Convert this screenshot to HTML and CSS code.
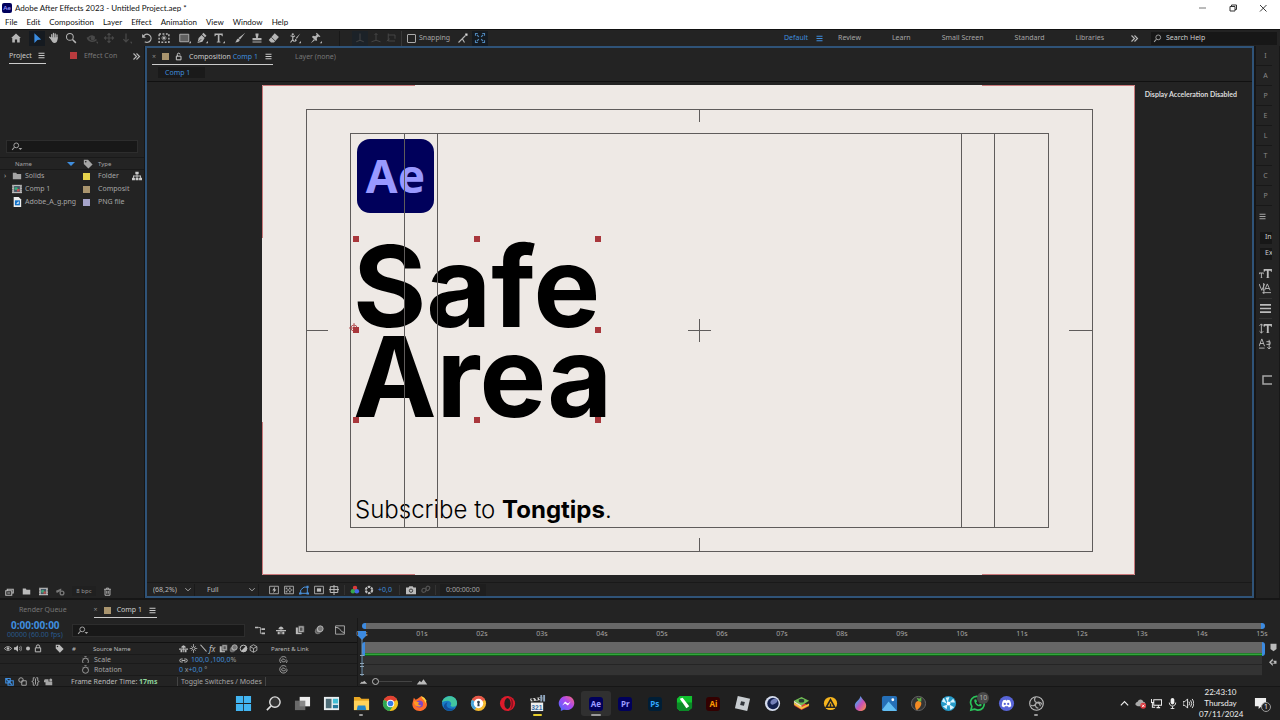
FILE: index.html
```html
<!DOCTYPE html>
<html lang="en">
<head>
    <meta charset="UTF-8">
    <meta name="viewport" content="width=device-width, initial-scale=1.0">
    <title>Adobe After Effects 2023 - Untitled Project.aep *</title>
    <link rel="stylesheet" href="styles.css">
</head>
<body>
    <!-- shared icons -->
    <svg class="sprite" aria-hidden="true">
        <symbol id="i-menu" viewBox="0 0 12 12"><path d="M2 3h8M2 6h8M2 9h8" fill="none" stroke="currentColor" stroke-width="1.4"/></symbol>
        <symbol id="i-more" viewBox="0 0 12 12"><path d="M2 2l4 4-4 4M6 2l4 4-4 4" fill="none" stroke="currentColor" stroke-width="1.5"/></symbol>
        <symbol id="i-search" viewBox="0 0 16 12"><circle cx="7" cy="4.5" r="3.2" fill="none" stroke="currentColor" stroke-width="1.3"/><path d="M4.6 7L1.5 10.5" stroke="currentColor" stroke-width="1.4"/><path d="M10 8h5l-2.500 2.500z" fill="currentColor"/></symbol>
        <symbol id="i-find" viewBox="0 0 12 12"><circle cx="7" cy="4.500" r="3.200" fill="none" stroke="currentColor" stroke-width="1.200"/><path d="M4.600 7L1.500 10.500" stroke="currentColor" stroke-width="1.400"/></symbol>
        <symbol id="i-down" viewBox="0 0 12 12"><path d="M2 4l4 4 4-4" fill="none" stroke="currentColor" stroke-width="1.300"/></symbol>
        <symbol id="i-tag" viewBox="0 0 12 12"><path d="M1 1h5l5.500 5.500-5 5L1 6z" fill="currentColor"/><circle cx="3.300" cy="3.300" r="1" fill="#222"/></symbol>
        <symbol id="i-folder" viewBox="0 0 12 12"><path d="M1 2h4l1 1.500h5V10H1z" fill="currentColor"/></symbol>
        <symbol id="i-comp" viewBox="0 0 12 12"><path d="M0 1h12v10H0z" fill="#bbb"/><path d="M2.500 2.500h7v7h-7z" fill="#456"/><circle cx="5" cy="5.500" r="2" fill="#3aa776"/><path d="M6 6h3v3H6z" fill="#c0504d"/><path d="M1 2v8M11 2v8" stroke="#333" stroke-dasharray="1 1"/></symbol>
        <symbol id="i-spiral" viewBox="0 0 12 12"><path d="M7.500 5.500a2 2 0 1 0-1 2.200c2 0 3-1 3-3.200M9.800 2.500A5 5 0 1 0 11 6" fill="none" stroke="currentColor" stroke-width="1.200"/></symbol>
        <symbol id="i-watch" viewBox="0 0 12 12"><circle cx="6" cy="7" r="4" fill="none" stroke="currentColor" stroke-width="1.200"/><path d="M4.500 1h3M2 2.500l1 1M10 2.500l-1 1" stroke="currentColor" stroke-width="1.200"/></symbol>
        <symbol id="i-shy" viewBox="0 0 12 12"><path d="M3 5a3 3 0 0 1 6 0zM0 6h12v1.500H0zM2 8h2.500v3H2zM7.500 8H10v3H7.500zM5.500 1.500h1V11h-1z" fill="currentColor"/></symbol>
        <symbol id="i-blend" viewBox="0 0 12 12"><path d="M1 3h7v8H1z" fill="currentColor"/><path d="M4 1h7v8H4z" fill="#aaa" stroke="#333" stroke-width=".8"/><path d="M6 3h3v4H6z" fill="#555"/></symbol>
        <symbol id="i-blur" viewBox="0 0 12 12"><circle cx="4.500" cy="7.500" r="3.500" fill="#777"/><circle cx="6" cy="6" r="3.500" fill="#999" stroke="#333" stroke-width=".7"/><circle cx="7.500" cy="4.500" r="3.500" fill="#777" stroke="#ccc" stroke-width=".9"/></symbol>
        <symbol id="i-cube" viewBox="0 0 12 12"><path d="M6 1l4.500 2.500v5L6 11 1.500 8.500v-5zM1.500 3.500L6 6l4.500-2.500M6 6v5" fill="none" stroke="currentColor" stroke-width="1.100"/></symbol>
    </svg>

    <div class="app">
        <header class="title-area">
            <div class="titlebar">
                <span class="ae-small">Ae</span>
                <span class="window-title">Adobe After Effects 2023 - Untitled Project.aep *</span>
                <div class="window-buttons">
                    <button aria-label="Minimize"><svg viewBox="0 0 10 10"><path d="M1 5h7" stroke="#777"/></svg></button>
                    <button aria-label="Restore"><svg viewBox="0 0 10 10"><path d="M2 3.500h5V8H2zM3.500 3.500V2h5v4.500H7" fill="none" stroke="#333"/></svg></button>
                    <button aria-label="Close"><svg viewBox="0 0 10 10"><path d="M2 2l6.500 6.500M8.500 2L2 8.500" stroke="#222" stroke-width="0.900"/></svg></button>
                </div>
            </div>
            <nav class="menubar">
                <button>File</button><button>Edit</button><button>Composition</button><button>Layer</button><button>Effect</button><button>Animation</button><button>View</button><button>Window</button><button>Help</button>
            </nav>
        </header>

        <div class="toolbar">
            <div class="tools">
                <div class="tool-group">
                    <button aria-label="Home"><svg viewBox="0 0 16 16"><path d="M8 2l6.500 6H13v6H9.500v-4h-3v4H3V8H1.500z" fill="currentColor"/></svg></button>
                </div>
                <div class="tool-group">
                    <button class="active" aria-label="Selection"><svg viewBox="0 0 16 16"><path d="M4.500 1.500l9 8.500-5 .5-4 4z" fill="#3a8be0"/></svg></button>
                    <button aria-label="Hand"><svg viewBox="0 0 16 16"><path d="M5 8V3.500M7.300 7V2M9.600 7V2.500M12 8V4M4.500 9L2.200 7" fill="none" stroke="currentColor" stroke-width="1.700" stroke-linecap="round"/><path d="M4 7h9c0 4-1 7.500-4 7.500S5 12 3 8.500z" fill="currentColor"/></svg></button>
                    <button aria-label="Zoom"><svg viewBox="0 0 16 16"><circle cx="6.500" cy="6.500" r="4.500" fill="none" stroke="currentColor" stroke-width="1.400"/><path d="M10 10l4.500 4.500" stroke="currentColor" stroke-width="2"/></svg></button>
                </div>
                <div class="tool-group dim">
                    <button aria-label="Orbit camera"><svg viewBox="0 0 16 16"><path d="M4 10a4 3 0 1 1 7-3M2 7c0 5 8 7 12 3" fill="none" stroke="currentColor" stroke-width="2"/><circle cx="9" cy="8" r="3" fill="currentColor"/><path d="M13 13h3v3z" fill="currentColor"/></svg></button>
                    <button aria-label="Pan camera"><svg viewBox="0 0 16 16"><path d="M8 2v12M2 8h12M6 4l2-2 2 2M6 12l2 2 2-2M4 6L2 8l2 2M12 6l2 2-2 2" fill="none" stroke="currentColor" stroke-width="1.500"/></svg></button>
                    <button aria-label="Dolly camera"><svg viewBox="0 0 16 16"><path d="M8 2v11M4.500 9.500L8 13l3.500-3.500" fill="none" stroke="currentColor" stroke-width="1.700"/><path d="M13 13h3v3z" fill="currentColor"/></svg></button>
                </div>
                <div class="tool-group">
                    <button aria-label="Rotation"><svg viewBox="0 0 16 16"><path d="M3 6a5.500 5.500 0 1 1 2 7" fill="none" stroke="currentColor" stroke-width="1.500"/><path d="M1.500 2.500v5h5z" fill="currentColor"/></svg></button>
                    <button aria-label="Pan behind"><svg viewBox="0 0 16 16"><path d="M1.500 2.500h13v11h-13z" fill="none" stroke="currentColor" stroke-width="2" stroke-dasharray="2.500 2"/><path d="M8 4.500v7M4.500 8h7M6 6l4 4M10 6l-4 4" stroke="currentColor" stroke-width="1.200"/></svg></button>
                </div>
                <div class="tool-group">
                    <button aria-label="Rectangle"><svg viewBox="0 0 16 16"><path d="M1 3h12v10H1z" fill="#606060" stroke="currentColor" stroke-width="1.200"/><path d="M13 15h3v-3z" fill="currentColor"/></svg></button>
                    <button aria-label="Pen"><svg viewBox="0 0 16 16"><path d="M10 1l4 4-2 2-4-4zM7.500 4l4 4-3 5-6.500 1.500L3.500 8z" fill="currentColor"/><path d="M3 13.500l4-4" stroke="#232323"/><path d="M13 15h3v-3z" fill="currentColor"/></svg></button>
                    <button aria-label="Type"><svg viewBox="0 0 16 16"><path d="M2 2h11v3.500h-1L11 4H8.600v8.500L10 13v1H5v-1l1.400-.5V4H4L3 5.500H2z" fill="currentColor"/><path d="M13 15h3v-3z" fill="currentColor"/></svg></button>
                </div>
                <div class="tool-group">
                    <button aria-label="Brush"><svg viewBox="0 0 16 16"><path d="M15 1L8 10 6 8zM5.500 8.500l2.300 2.300c-1 3-3.500 3.200-6.300 3.200 2-1.500 1.500-5 4-5.500z" fill="currentColor"/></svg></button>
                    <button aria-label="Clone stamp"><svg viewBox="0 0 16 16"><path d="M6 2h4v2L9 8h5v3H2V8h5L6 4zM2 12.500h12V14H2z" fill="currentColor"/></svg></button>
                    <button aria-label="Eraser"><svg viewBox="0 0 16 16"><path d="M9 1.500l5.500 5L8 14H4L1 10.500z" fill="currentColor"/><path d="M4.500 7l5 5" stroke="#232323"/></svg></button>
                </div>
                <div class="tool-group">
                    <button aria-label="Roto brush"><svg viewBox="0 0 16 16"><path d="M2 5l3 1v4l-3 4M5 7l3-2M5 10l2 3" fill="none" stroke="currentColor" stroke-width="1.500"/><circle cx="5" cy="3" r="1.500" fill="currentColor"/><path d="M15 2l-4.500 7-1.500-1zM8.500 9l2 1.500c-1 2-2 2.500-3.500 2.500z" fill="currentColor"/><path d="M13 15h3v-3z" fill="currentColor"/></svg></button>
                </div>
                <div class="tool-group">
                    <button aria-label="Puppet pin"><svg viewBox="0 0 16 16"><path d="M9 1l5 5-1.500.5L11 6l-2 2 .5 3-1.500 1L2.500 6.500 4 5l3 .5 2-2L8 2zM5 9.500l1.500 1.500L1 15z" fill="currentColor"/><path d="M13 15h3v-3z" fill="currentColor"/></svg></button>
                </div>
                <div class="tool-group axes">
                    <button class="active" aria-label="Local axis"><svg viewBox="0 0 16 16"><path d="M8 2v9l-5 2M8 11l5 2" fill="none" stroke="currentColor" stroke-width="1.200"/></svg></button>
                    <button aria-label="World axis"><svg viewBox="0 0 16 16"><path d="M8 2v9l-6 2M8 11l6 2M6 4l2-2 2 2" fill="none" stroke="currentColor" stroke-width="1.200"/></svg></button>
                    <button aria-label="View axis"><svg viewBox="0 0 16 16"><path d="M3 2v10h9M3 4h9v5M1 12l4-3" fill="none" stroke="currentColor" stroke-width="1.200"/></svg></button>
                </div>
                <label class="snapping"><input type="checkbox"> Snapping</label>
                <div class="tool-group">
                    <button aria-label="Snap edges"><svg viewBox="0 0 16 16"><path d="M2 14l5-5 3 5M7 9l4-4" fill="none" stroke="currentColor" stroke-width="1.500"/><path d="M11 2h3v3h-3z" fill="#ddd"/></svg></button>
                    <button class="active" aria-label="Snap features"><svg viewBox="0 0 16 16"><path d="M2 5V2h3M11 2h3v3M14 11v3h-3M5 14H2v-3M4 4l2.500 2.500M12 4L9.500 6.500M12 12L9.500 9.500M4 12l2.500-2.500" fill="none" stroke="#4f86b8" stroke-width="1.500"/></svg></button>
                </div>
            </div>
            <nav class="workspaces">
                <button class="current">Default</button>
                <button class="current menu-btn" aria-label="Workspace menu"><svg><use href="#i-menu"/></svg></button>
                <button>Review</button>
                <button>Learn</button>
                <button>Small Screen</button>
                <button>Standard</button>
                <button>Libraries</button>
            </nav>
            <button class="more-btn" aria-label="More workspaces"><svg><use href="#i-more"/></svg></button>
            <label class="help-search"><svg><use href="#i-find"/></svg><input type="text" placeholder="Search Help" aria-label="Search Help"></label>
        </div>

        <main class="panels">
            <section class="panel project">
                <div class="tabs">
                    <button class="tab selected">Project <svg><use href="#i-menu"/></svg></button>
                    <button class="tab effect-tab"><span class="swatch red"></span>Effect Con</button>
                    <button class="more-btn" aria-label="More panels"><svg><use href="#i-more"/></svg></button>
                </div>
                <label class="search-box project-search"><svg><use href="#i-search"/></svg><input type="text" aria-label="Search project"></label>
                <table class="files">
                    <thead>
                        <tr><th class="c-arrow"></th><th class="c-name">Name <span class="sort"></span></th><th class="c-label"><svg class="ico"><use href="#i-tag"/></svg></th><th class="c-type">Type</th><th></th></tr>
                    </thead>
                    <tbody>
                        <tr><td>›</td><td><span class="file"><svg class="ico"><use href="#i-folder"/></svg>Solids</span></td><td><span class="swatch yellow"></span></td><td>Folder</td><td><svg class="ico" viewBox="0 0 12 12"><path d="M4 1h4v3H4zM0 8h3.500v3H0zM4.300 8h3.500v3H4.300zM8.500 8H12v3H8.500zM1.200 5.500h9.600v1H1.200zM5.500 4h1v4h-1zM1.200 6h1v2h-1zM9.800 6h1v2h-1z" fill="#ccc"/></svg></td></tr>
                        <tr><td></td><td><span class="file"><svg class="ico"><use href="#i-comp"/></svg>Comp 1</span></td><td><span class="swatch sand"></span></td><td>Composit</td><td></td></tr>
                        <tr><td></td><td><span class="file"><svg class="ico" viewBox="0 0 12 12"><path d="M2 0h6l3 3v9H2z" fill="#eee"/><path d="M3.500 4h6v6h-6z" fill="#1473c8"/><path d="M5 8l3-3v3z" fill="#fff"/></svg>Adobe_A_g.png</span></td><td><span class="swatch lilac"></span></td><td>PNG file</td><td></td></tr>
                    </tbody>
                </table>
                <div class="project-footer">
                    <button aria-label="Interpret footage"><svg viewBox="0 0 12 12"><path d="M1 5h8v6H1zM3 5V3h8v5H9M3 8h4" fill="none" stroke="currentColor" stroke-width="1.400"/></svg></button>
                    <button aria-label="New folder"><svg><use href="#i-folder"/></svg></button>
                    <button aria-label="New composition"><svg><use href="#i-comp"/></svg></button>
                    <button class="off" aria-label="Adjust settings"><svg viewBox="0 0 12 12"><path d="M0 5l7-3v3L1 8z" fill="currentColor"/><circle cx="8" cy="8" r="2.500" fill="none" stroke="currentColor" stroke-width="1.800"/></svg></button>
                    <button class="bpc">8 bpc</button>
                    <button aria-label="Delete"><svg viewBox="0 0 12 12"><path d="M1.500 3h9M4.500 3V1.500h3V3M2.700 3v8h6.600V3M5 5v4M7 5v4" fill="none" stroke="currentColor" stroke-width="1.200"/></svg></button>
                </div>
            </section>

            <section class="panel viewer">
                <div class="tabs">
                    <button class="tab selected">
                        <span class="x">×</span><span class="swatch sand"></span>
                        <svg class="lock" viewBox="0 0 12 12"><path d="M2 5.500h7V11H2zM3.500 5.500V3a2 2 0 0 1 4 0" fill="none" stroke="currentColor" stroke-width="1.500"/></svg>
                        <span>Composition <span class="blue">Comp 1</span></span> <svg><use href="#i-menu"/></svg>
                    </button>
                    <button class="tab layer-tab">Layer (none)</button>
                </div>
                <div class="flow"><button>Comp 1</button></div>
                <div class="stage">
                    <div class="canvas">
                        <div class="logo">Ae</div>
                        <h1>Safe<br>Area</h1>
                        <p class="subscribe">Subscribe to <b>Tongtips</b>.</p>
                        <svg class="guides" viewBox="0 0 873 490" aria-hidden="true">
                            <g fill="none" stroke="#5f5c5b" shape-rendering="crispEdges">
                                <path d="M44 24.500h786v442H44zM88 48.500h698v394H88z"/>
                                <path d="M142.500 48v394M175.500 48v394M699.500 48v394M732.500 48v394"/>
                                <path d="M437.500 24v13M437.500 453v13M44 245.500h22M807 245.500h23M426 245.500h23M437.500 234v23"/>
                            </g>
                            <path d="M.5 153V.5H153M720 .5h152.500v489H720M153 489.500H.5V337" fill="none" stroke="#c9787a"/>
                            <g fill="#a9373c">
                                <path d="M91 151h6v6h-6zM212 151h6v6h-6zM333 151h6v6h-6zM91 242h6v6h-6zM333 242h6v6h-6zM91 332h6v6h-6zM212 332h6v6h-6zM333 332h6v6h-6z"/>
                            </g>
                            <path d="M92 238v10M87 243h10" stroke="#a9373c" stroke-width="0.800"/><circle cx="92" cy="243" r="3" fill="none" stroke="#a9373c" stroke-width="0.800"/>
                        </svg>
                    </div>
                    <span class="notice">Display Acceleration Disabled</span>
                </div>
                <div class="viewer-footer">
                    <label class="pick zoom-pick"><select aria-label="Magnification"><option>(68,2%)</option></select><svg><use href="#i-down"/></svg></label>
                    <label class="pick res-pick"><select aria-label="Resolution"><option>Full</option></select><svg><use href="#i-down"/></svg></label>
                    <div class="view-icons">
                        <button aria-label="Fast previews"><svg viewBox="0 0 12 12"><path d="M.7 1.500h10.600v9H.7z" fill="none" stroke="currentColor"/><path d="M7 2L4 6.500h2L5 10l4-4.500H7z" fill="currentColor"/></svg></button>
                        <button aria-label="Transparency grid"><svg viewBox="0 0 12 12"><path d="M.7 1.500h10.600v9H.7z" fill="none" stroke="currentColor"/><path d="M2 3h2v2H2zM6 3h2v2H6zM4 5h2v2H4zM8 5h2v2H8zM2 7h2v2H2zM6 7h2v2H6z" fill="#999"/></svg></button>
                        <button aria-label="Mask visibility"><svg viewBox="0 0 12 12"><path d="M2 10V6l4-3.500h4V10z" fill="none" stroke="#4a90d9" stroke-width="1.200"/><path d="M0 9h3v2.500H0zM9 9h3v2.500H9zM9 1h2.500v2.500H9z" fill="#4a90d9"/></svg></button>
                        <button aria-label="Region of interest"><svg viewBox="0 0 12 12"><path d="M.7 1.500h10.600v9H.7z" fill="none" stroke="currentColor"/><path d="M3.500 4h5v4h-5z" fill="currentColor"/></svg></button>
                        <button aria-label="Guides"><svg viewBox="0 0 12 12"><path d="M1.500 2h9v7h-9zM6 0v12M0 5.500h12" fill="none" stroke="currentColor" stroke-width="1.200"/></svg></button>
                    </div>
                    <div class="view-icons colour">
                        <button aria-label="Channels"><svg viewBox="0 0 12 12"><circle cx="6" cy="3.500" r="2.700" fill="#d83a3a"/><circle cx="3.500" cy="7.500" r="2.700" fill="#36a84a"/><circle cx="8.200" cy="7.500" r="2.700" fill="#4467e8"/></svg></button>
                        <button aria-label="Reset exposure"><svg viewBox="0 0 12 12"><circle cx="6" cy="6" r="3.800" fill="none" stroke="currentColor" stroke-width="2.600" stroke-dasharray="3 1"/></svg></button>
                        <button class="blue exposure">+0,0</button>
                    </div>
                    <div class="view-icons snap">
                        <button aria-label="Take snapshot"><svg viewBox="0 0 12 12"><path d="M0 3h3l1-1.500h4L9 3h3v8H0z" fill="currentColor"/><circle cx="6" cy="6.800" r="2" fill="none" stroke="#232323"/></svg></button>
                        <button class="off" aria-label="Show snapshot"><svg viewBox="0 0 12 12"><path d="M1 7c0-4 5-4 5-1S1 10 1 7zM6 3c2-3 6-1 4 2S6 7 6 3z" fill="none" stroke="currentColor" stroke-width="1.400"/></svg></button>
                    </div>
                    <button class="preview-time">0:00:00:00</button>
                </div>
            </section>

            <aside class="dock">
                <button>I</button><button>A</button><button>P</button><button>E</button><button>L</button><button>T</button><button>C</button><button>P</button>
                <svg class="dock-menu"><use href="#i-menu"/></svg>
                <div class="fields"><span>In</span><span>Ex</span></div>
                <div class="char-icons">
                    <svg viewBox="0 0 14 12"><path d="M5 1h9v3h-1l-.5-1H10.500v7.500h1V11h-4v-.5h1V3H6.500L6 4H5zM0 5h5v2L4 6H3v4.500h1V11H1.500v-.5H2V6H1L0 7z" fill="currentColor"/></svg>
                    <svg viewBox="0 0 14 12"><path d="M0 1l3 7 3-7M6 8l3-7 3 7M7 6h4M5 0v9M4 10.500h9M6 9l-2 1.500L6 12" fill="none" stroke="currentColor"/></svg>
                    <hr>
                    <svg viewBox="0 0 14 12"><path d="M1 2h12M1 6h12M1 10h12" stroke="currentColor" stroke-width="1.800"/></svg>
                    <hr>
                    <svg viewBox="0 0 14 12"><path d="M2.500 1v10M.5 3l2-2 2 2M.5 9l2 2 2-2" fill="none" stroke="currentColor"/><path d="M5 1h9v3h-1l-.5-1H10.500v7.500h1V11h-4v-.5h1V3H6.500L6 4H5z" fill="currentColor"/></svg>
                    <svg viewBox="0 0 14 12"><path d="M0 9l3-8 3 8M1 6h4M0 11h6M8 4h4v3H8M11 2v10M9 10l2 2 2-2" fill="none" stroke="currentColor"/></svg>
                </div>
                <svg class="bracket" viewBox="0 0 12 12"><path d="M12 2H3v8h9" fill="none" stroke="currentColor" stroke-width="1.500"/></svg>
            </aside>
        </main>

        <section class="timeline">
            <div class="tabs">
                <button class="tab queue-tab">Render Queue</button>
                <button class="tab selected"><span class="x">×</span><span class="swatch sand"></span>Comp 1 <svg><use href="#i-menu"/></svg></button>
            </div>
            <div class="layers">
                <div class="layer-head">
                    <div class="timecode"><b>0:00:00:00</b><span>00000 (60.00 fps)</span></div>
                    <label class="search-box"><svg><use href="#i-search"/></svg><input type="text" aria-label="Search layers"></label>
                    <div class="layer-tools">
                        <button aria-label="Mini flowchart"><svg viewBox="0 0 12 12"><path d="M0 2h4v2H0zM8 4h4v2H8zM8 9h4v2H8z" fill="currentColor"/><path d="M4 3h2.500v7H8M6.500 5H8" fill="none" stroke="currentColor"/></svg></button>
                        <button aria-label="Hide shy layers"><svg><use href="#i-shy"/></svg></button>
                        <button aria-label="Frame blending"><svg><use href="#i-blend"/></svg></button>
                        <button aria-label="Motion blur"><svg><use href="#i-blur"/></svg></button>
                        <button aria-label="Graph editor"><svg viewBox="0 0 12 12"><path d="M.7 1h10.600v10H.7zM2 3c5 0 4 6 9 6M0 3h3" fill="none" stroke="currentColor"/></svg></button>
                    </div>
                </div>
                <div class="layer-row columns">
                    <div class="av">
                        <svg viewBox="0 0 12 12"><path d="M.5 6Q6 0 11.500 6 6 12 .5 6z" fill="none" stroke="currentColor" stroke-width="1.200"/><circle cx="6" cy="6" r="2" fill="currentColor"/></svg>
                        <svg viewBox="0 0 12 12"><path d="M0 4h2.500L6 1v10L2.500 8H0z" fill="currentColor"/><path d="M8 3.500q2 2.500 0 5M10 2q3 4 0 8" fill="none" stroke="currentColor"/></svg>
                        <svg viewBox="0 0 12 12"><circle cx="6" cy="6" r="3" fill="currentColor"/></svg>
                        <svg viewBox="0 0 12 12"><path d="M2 5h8v6H2zM3.500 5V3a2.500 2.500 0 0 1 5 0v2" fill="none" stroke="currentColor" stroke-width="1.500"/></svg>
                    </div>
                    <div class="num"><svg><use href="#i-tag"/></svg><span>#</span></div>
                    <span class="source">Source Name</span>
                    <div class="switches">
                        <svg><use href="#i-shy"/></svg>
                        <svg viewBox="0 0 12 12"><path d="M6 0v12M1 6h10M3 3l6 6M9 3L3 9" stroke="currentColor"/><circle cx="6" cy="6" r="2" fill="#232323" stroke="currentColor"/></svg>
                        <svg viewBox="0 0 12 12"><path d="M2 1l8 9" stroke="currentColor" stroke-width="1.500"/></svg>
                        <i>fx</i>
                        <svg><use href="#i-blend"/></svg>
                        <svg><use href="#i-blur"/></svg>
                        <svg viewBox="0 0 12 12"><circle cx="6" cy="6" r="4.500" fill="none" stroke="currentColor" stroke-width="1.300"/><path d="M9.200 2.800a4.500 4.500 0 1 1-6.400 6.400z" fill="currentColor"/></svg>
                        <svg><use href="#i-cube"/></svg>
                    </div>
                    <span class="parent">Parent &amp; Link</span>
                </div>
                <div class="layer-row prop scale-row">
                    <span class="prop-name"><svg><use href="#i-watch"/></svg>Scale</span>
                    <span class="value"><svg viewBox="0 0 12 12"><path d="M5 4H3a2 2 0 0 0 0 4h2M7 4h2a2 2 0 0 1 0 4H7M3.500 6h5" fill="none" stroke="#bbb" stroke-width="1.300"/></svg>100,0 ,100,0<em>%</em></span>
                    <span class="parent"><svg><use href="#i-spiral"/></svg></span>
                </div>
                <div class="layer-row prop">
                    <span class="prop-name"><svg><use href="#i-watch"/></svg>Rotation</span>
                    <span class="value">0<em> x</em>+0,0<em> °</em></span>
                    <span class="parent"><svg><use href="#i-spiral"/></svg></span>
                </div>
                <div class="layer-row layer-footer">
                    <div class="toggles">
                        <svg class="blue" viewBox="0 0 12 12"><path d="M1 2h6v6H1zM4 5h7v6H4zM1 2l8 8" fill="none" stroke="currentColor" stroke-width="1.500"/></svg>
                        <svg viewBox="0 0 12 12"><circle cx="4" cy="4" r="3" fill="none" stroke="currentColor" stroke-width="1.300"/><path d="M5 5h6v6H5z" fill="none" stroke="currentColor" stroke-width="1.300"/></svg>
                        <svg viewBox="0 0 12 12"><path d="M5 1H3v4L1 6l2 1v4h2M7 1h2v4l2 1-2 1v4H7M6 2v8" fill="none" stroke="currentColor" stroke-width="1.300"/></svg>
                        <svg viewBox="0 0 12 12"><path d="M1 3h5v3h5v5H2V7H0V5z" fill="currentColor"/><circle cx="9" cy="4" r="2" fill="currentColor"/></svg>
                    </div>
                    <span class="render-time">Frame Render Time: <b>17ms</b></span>
                    <button class="toggle-btn">Toggle Switches / Modes</button>
                </div>
            </div>
            <div class="track">
                <div class="navigator"></div>
                <div class="ruler">
                    <span>00s</span><span>01s</span><span>02s</span><span>03s</span><span>04s</span><span>05s</span><span>06s</span><span>07s</span><span>08s</span><span>09s</span><span>10s</span><span>11s</span><span>12s</span><span>13s</span><span>14s</span><span>15s</span>
                </div>
                <div class="work-area"></div>
                <div class="track-rows"><div></div><div></div></div>
                <div class="track-footer">
                    <svg viewBox="0 0 12 12"><path d="M1 9l3-3 1 1 2-2 4 4z" fill="currentColor"/></svg>
                    <input type="range" min="0" max="100" value="0" aria-label="Timeline zoom">
                    <svg class="big" viewBox="0 0 14 12"><path d="M0 10l4-5 2 2 3-4 5 7z" fill="currentColor"/></svg>
                </div>
                <svg class="playhead" viewBox="0 0 10 46"><path d="M1 1h8v5l-4 4-4-4z" fill="#3c8ae0"/><path d="M5 9v37" stroke="#6d93b5"/><path d="M3 25.500h4M3 33.500h4M3 36.500h4M3 44.500h4" stroke="#8fa5b5"/></svg>
            </div>
            <div class="markers">
                <svg viewBox="0 0 12 12"><path d="M2 1h8v7l-4 3-4-3z" fill="currentColor"/></svg>
                <svg viewBox="0 0 12 12"><path d="M0 7l5-5v3h5v4H5v3z" fill="currentColor"/><circle cx="5" cy="7" r="1.800" fill="#333"/></svg>
            </div>
        </section>

        <footer class="taskbar">
            <nav class="apps">
                <button aria-label="Start"><svg viewBox="0 0 18 18"><path d="M1 1h7.600v7.600H1zM9.400 1H17v7.600H9.400zM1 9.400h7.600V17H1zM9.400 9.400H17V17H9.400z" fill="#42b5f2"/></svg></button>
                <button aria-label="Search"><svg viewBox="0 0 18 18"><circle cx="10.500" cy="7.500" r="5.500" fill="#333" stroke="#ddd" stroke-width="1.500"/><path d="M6.500 11.500L2 16" stroke="#ddd" stroke-width="1.700"/></svg></button>
                <button aria-label="Task view"><svg viewBox="0 0 18 18"><path d="M6 2h11v10H6z" fill="#eee"/><path d="M1 6h11v10H1z" fill="#777" opacity=".85"/></svg></button>
                <button aria-label="Widgets"><svg viewBox="0 0 18 18"><path d="M1 2h16v14H1z" fill="#e8eef0"/><path d="M3 4h6v10H3z" fill="#4e6d78"/><path d="M10.500 4H16v5h-5.500z" fill="#42bfd6"/><path d="M10.500 10.500H16V14h-5.500z" fill="#25789c"/></svg></button>
                <button class="running" aria-label="Explorer"><svg viewBox="0 0 18 18"><path d="M1 2h6l2 2h8v12H1z" fill="#e9a723"/><path d="M1 6h16v10H1z" fill="#ffd35b"/><path d="M5 11h8l1 5H4z" fill="#2387ca"/></svg></button>
                <button aria-label="Chrome"><svg viewBox="0 0 18 18"><circle cx="9" cy="9" r="8" fill="#f4c21f"/><path d="M9 9L2 5a8 8 0 0 1 14 0z" fill="#e24133"/><path d="M9 9L2 5a8 8 0 0 0 6 12l4-6z" fill="#2fa653"/><circle cx="9" cy="9" r="4" fill="#fff"/><circle cx="9" cy="9" r="3" fill="#347be8"/></svg></button>
                <button aria-label="Firefox"><svg viewBox="0 0 18 18"><path d="M1.500 9L3 3l2 2 2-1 4-3 1 2 2 0 2 4c3 5-2 10-7 10S1 13 1.500 9z" fill="#ff6c2c"/><path d="M11 1c0 4 4 3 4 8l1.500-3L14 3z" fill="#ffd23c"/><circle cx="9" cy="9.500" r="3.800" fill="#8047c5"/><path d="M3 7c3-1 4 1 6 1-2 1-2 3 2 3-4 3-8 0-8-4z" fill="#ff9b24"/></svg></button>
                <button aria-label="Edge"><svg viewBox="0 0 18 18"><circle cx="9" cy="9" r="8" fill="#187bc5"/><path d="M1 8c2-9 16-9 16 1 0 4-6 4-7 2 2-2 0-5-3-5-3 0-5 1-6 2z" fill="#42c6a0"/><path d="M7 8c-3 3 0 8 7 6-4 5-11 2-11-2 0-2 2-4 4-4z" fill="#124e9b"/></svg></button>
                <button aria-label="Browser"><svg viewBox="0 0 18 18"><circle cx="9" cy="9" r="8" fill="#f5b92e"/><path d="M9 9L2 5a8 8 0 0 1 14 0z" fill="#e6574a"/><path d="M9 9L2 5a8 8 0 0 0 3 11z" fill="#4ba5db"/><circle cx="9" cy="9" r="5" fill="#fff"/><circle cx="9" cy="7.500" r="1.500" fill="#345"/><path d="M8.300 8h1.400l.5 4H7.800z" fill="#345"/></svg></button>
                <button aria-label="Opera"><svg viewBox="0 0 18 18"><circle cx="9" cy="9" r="8" fill="#dc1b2b"/><ellipse cx="9" cy="9" rx="3.300" ry="5.800" fill="#202020"/><path d="M11 2a8 8 0 0 1 0 14c3-3 3-11 0-14z" fill="#8f1020"/></svg></button>
                <button class="alert" aria-label="Media Player Classic"><svg viewBox="0 0 18 18"><path d="M2 8h13v9H2z" fill="#eee"/><path d="M1 4l13-2v3L2 7z" fill="#ddd"/><path d="M3 4l2 2M7 3l2 2M11 3l2 2" stroke="#222" stroke-width="2"/><path d="M12 0h2v7h-2zM15 0h2v7h-2z" fill="#8ea5bd"/><text x="2.500" y="15.500" font-family="Liberation Sans" font-size="7" font-weight="bold" fill="#376da8">321</text></svg></button>
                <button aria-label="Messenger"><svg viewBox="0 0 18 18"><defs><linearGradient id="msg" x1="0" y1="1" x2="1" y2="0"><stop stop-color="#3e6cff"/><stop offset=".55" stop-color="#a948f2"/><stop offset="1" stop-color="#ff6b72"/></linearGradient></defs><path d="M9 1c11 0 11 15 0 15l-3-.5L3 17v-3C-2 9 2 1 9 1z" fill="url(#msg)"/><path d="M4.500 11l3-4 3 2 3-2-3 4-3-2z" fill="#fff"/></svg></button>
                <button class="running focused" aria-label="After Effects"><span class="adobe ae">Ae</span></button>
                <button aria-label="Premiere Pro"><span class="adobe ae">Pr</span></button>
                <button aria-label="Photoshop"><span class="adobe ps">Ps</span></button>
                <button aria-label="CorelDRAW"><svg viewBox="0 0 18 18"><path d="M4 1h13v12l-4 4H4l-3-3V4z" fill="#10c22f"/><path d="M1 8h16v6l-4 3H4l-3-3z" fill="#0b8a27"/><path d="M4 4l3-1 7 9-3 2z" fill="#fff"/></svg></button>
                <button aria-label="Illustrator"><span class="adobe ai">Ai</span></button>
                <button aria-label="Roblox"><svg viewBox="0 0 18 18"><path d="M4 1l13 3-3 13-13-3z" fill="#c8cdd1"/><path d="M7.500 6.500l4 1-1 4-4-1z" fill="#30353a"/></svg></button>
                <button aria-label="Cinema 4D"><svg viewBox="0 0 18 18"><circle cx="9" cy="9" r="8" fill="#d5dced"/><circle cx="9.500" cy="9" r="6" fill="#14214e"/><ellipse cx="10.500" cy="7" rx="4" ry="2.600" transform="rotate(-35 10.500 7)" fill="#7480b9"/></svg></button>
                <button aria-label="BlueStacks"><svg viewBox="0 0 18 18"><path d="M1 11l8 5 8-4-8-5z" fill="#df4338"/><path d="M1 8l8 5 8-4v2l-8 4-8-5z" fill="#f3c73d"/><path d="M1 6l8-4 8 4-8 5z" fill="#71bd54"/><path d="M1 6l8 5v2L1 8z" fill="#e8e8c0"/><ellipse cx="9" cy="6" rx="3" ry="2" fill="#263934"/></svg></button>
                <button aria-label="AIMP"><svg viewBox="0 0 18 18"><circle cx="9" cy="9" r="7" fill="#f6b51e"/><path d="M9 5l4.500 8h-9z" fill="none" stroke="#252525" stroke-width="1.700"/><path d="M9 9v4" stroke="#252525" stroke-width="1.500"/></svg></button>
                <button aria-label="Paint 3D"><svg viewBox="0 0 18 18"><defs><linearGradient id="drop" x1="0" y1="0" x2="1" y2="1"><stop offset=".2" stop-color="#42aaf0"/><stop offset=".55" stop-color="#c850b9"/><stop offset="1" stop-color="#ff9833"/></linearGradient></defs><path d="M9 1c2 4 6 6 6 10 0 8-12 8-12 0 0-4 5-5 6-10z" fill="url(#drop)"/></svg></button>
                <button aria-label="Photos"><svg viewBox="0 0 18 18"><rect x="1" y="1" width="16" height="16" rx="2" fill="#256fb7"/><path d="M1 16l7-9 9 10H3z" fill="#62bdf2"/><circle cx="12.500" cy="5" r="1.500" fill="#fff"/></svg></button>
                <button aria-label="FL Studio"><svg viewBox="0 0 18 18"><circle cx="9" cy="9" r="7.500" fill="#343434" stroke="#666"/><path d="M6 8c3-3 6-1 6 1 0 3-3 6-5 7-2-2-2-6-1-8z" fill="#f58b23"/><path d="M9 7L7 3l3 1 2-2v5z" fill="#66b64b"/></svg></button>
                <button aria-label="Fan control"><svg viewBox="0 0 18 18"><circle cx="9" cy="9" r="8" fill="#269bc9"/><path d="M8 8L6 3l4-1zM10 8l4-4 2 4zM10 10l5 3-4 3zM8 10l-1 5-4-3zM7 9L2 7l2-4z" fill="#d7f4ff"/><circle cx="9" cy="9" r="2" fill="#fff"/></svg></button>
                <button aria-label="WhatsApp"><svg viewBox="0 0 18 18"><path d="M2 16l1-4C-1 5 5 1 9 1.500c9 0 10 15 0 14.500l-3-1z" fill="#202020" stroke="#2bc35a" stroke-width="1.800"/><path d="M5.500 5l2-.5 1 2.500-1 1c1 1.500 2 2 3 2.500l1-1.500 2 1c0 4-8 2-8-5z" fill="#2bc35a"/></svg><span class="badge">10</span></button>
                <button aria-label="Discord"><svg viewBox="0 0 18 18"><circle cx="9" cy="9" r="8" fill="#5865d8"/><path d="M4 12c0-3 .5-5 1.500-6.500L8 5l.5.700h1L10 5l2.500.5C13.500 7 14 9 14 12l-2.500 1.200-1-1.200h-3l-1 1.200z" fill="#fff"/><circle cx="7.200" cy="9.500" r="1.200" fill="#5865d8"/><circle cx="10.800" cy="9.500" r="1.200" fill="#5865d8"/></svg></button>
                <button class="running" aria-label="OBS"><svg viewBox="0 0 18 18"><circle cx="9" cy="9" r="7.200" fill="#252525" stroke="#bbb" stroke-width="1.200"/><path d="M8 2c-2 3-1 5 1 6 2 0 4 1 4 4M9 8c-1 3-3 4-6 3M9 8c3-1 5 0 6 2M8 9c-1 3 1 5 3 5" fill="none" stroke="#aaa" stroke-width="1.300"/></svg></button>
            </nav>
            <div class="tray">
                <svg viewBox="0 0 12 12"><path d="M2 8l4-4 4 4" fill="none" stroke="currentColor" stroke-width="1.300"/></svg>
                <svg viewBox="0 0 12 12"><path d="M1 8c-2-3 2-4 2-4 1-3 5-3 6 0 3 0 3 5 1 5H3z" fill="#aaa"/><circle cx="9" cy="8.500" r="3.200" fill="#d93a40"/><path d="M7.800 7.300l2.400 2.400M10.200 7.300L7.800 9.700" stroke="#fff"/></svg>
                <svg viewBox="0 0 12 12"><path d="M3 2h8.500v6H3zM6 10.500h4M8 8v2.500M.5 1v4h2M1.500 5v5h3" fill="none" stroke="currentColor" stroke-width="1.100"/></svg>
                <svg viewBox="0 0 12 12"><rect x="4" y="0" width="4" height="7" rx="2" fill="currentColor"/><path d="M2.500 5c0 5 7 5 7 0M6 9v2.500M4 11.500h4" fill="none" stroke="currentColor"/></svg>
                <svg viewBox="0 0 12 12"><path d="M0 4h2l3-3v10L2 8H0zM6.500 4q1.500 2 0 4M8.300 2.500q2.500 3.500 0 7M10 1q3.500 5 0 10" fill="none" stroke="currentColor"/></svg>
                <div class="clock"><span>22:43:10</span><span>Thursday</span><span>07/11/2024</span></div>
                <button class="notify" aria-label="Notifications"><svg viewBox="0 0 14 14"><path d="M1 1h12v9H8l-3 3v-3H1z" fill="#eee"/></svg><span class="badge">1</span></button>
            </div>
        </footer>
    </div>
</body>
</html>
```

FILE: styles.css
```css
* {
    box-sizing: border-box;
}

body {
    margin: 0;
    background: #161616;
    color: #a5a5a5;
    font-family: "Noto Sans", "Open Sans", sans-serif;
    font-size: 7px;
    line-height: 10px;
}

button,
input,
select {
    margin: 0;
    padding: 0;
    border: none;
    background: none;
    color: inherit;
    font: inherit;
}

svg {
    width: 9px;
    height: 9px;
    flex: none;
    display: block;
}

.sprite {
    width: 0;
    height: 0;
    position: absolute;
}

.blue {
    color: #3f8ddd;
}

.off {
    color: #555;
}

.app {
    min-height: 100vh;
    display: grid;
    grid-template-rows: 29px 17px 1fr 88px 34px;
}

/* title and menu */
.title-area {
    background: #fff;
    color: #111;
    font-family: Lato, sans-serif;
    font-size: 8px;
}

.titlebar,
.menubar {
    display: flex;
    align-items: center;
}

.titlebar {
    height: 15px;
    padding-left: 2px;
}

.ae-small {
    width: 10px;
    height: 10px;
    margin-right: 3px;
    border-radius: 2px;
    background: #00005b;
    color: #9d9dff;
    font-size: 6px;
    font-weight: bold;
    text-align: center;
}

.window-buttons {
    display: flex;
    gap: 20px;
    margin-left: auto;
    padding-right: 12px;
}

.window-buttons svg {
    width: 10px;
    height: 10px;
}

.menubar {
    gap: 9px;
    padding: 2px 5px;
}

/* toolbar */
.toolbar {
    display: flex;
    align-items: center;
    background: #232323;
    border-top: 1px solid #111;
}

.tools,
.tool-group {
    display: flex;
    align-items: center;
}

.tools {
    gap: 5px;
    padding-left: 8px;
}

.tool-group {
    gap: 1px;
    color: #b5b5b5;
}

.tool-group button {
    width: 16px;
    height: 15px;
    display: grid;
    place-items: center;
}

.tool-group svg {
    width: 12px;
    height: 12px;
}

.tool-group button.active {
    background: #151a20;
}

.tool-group.dim,
.tool-group.axes {
    color: #484848;
}

.tool-group.axes {
    gap: 0;
    margin-left: 10px;
    padding: 0 1px 0 12px;
    border-left: 1px solid #181818;
    border-right: 1px solid #383838;
}

.axes button.active {
    background: #1c2228;
}

.snapping {
    display: flex;
    align-items: center;
    gap: 3px;
}

.snapping input {
    appearance: none;
    width: 9px;
    height: 9px;
    border: 1px solid #aaa;
    border-radius: 1px;
}

.workspaces {
    display: flex;
    align-items: center;
    gap: 31px;
    margin-left: auto;
}

.workspaces .current {
    color: #3f8ddd;
}

.workspaces .menu-btn {
    margin: 0 -17px 0 -24px;
}

.more-btn {
    color: #bbb;
}

.toolbar .more-btn {
    margin: 0 12px 0 26px;
}

.help-search {
    width: 126px;
    height: 13px;
    display: flex;
    align-items: center;
    gap: 4px;
    margin-right: 3px;
    padding-left: 2px;
    background: #171717;
}

.help-search input {
    width: 100px;
}

.help-search input::placeholder {
    color: #ccc;
}

/* panels */
.panels {
    min-height: 0;
    display: grid;
    grid-template-columns: 145px minmax(0, 1fr) 26px;
}

.panel {
    min-width: 0;
    display: flex;
    flex-direction: column;
    background: #232323;
}

.tabs {
    display: flex;
    align-items: center;
    height: 18px;
}

.tab {
    display: flex;
    align-items: center;
    gap: 5px;
    height: 15px;
    border-bottom: 1px solid transparent;
    color: #777;
    white-space: nowrap;
}

.tab.selected {
    border-bottom-color: #ccc;
    color: #ccc;
}

.tab .x {
    color: #888;
}

.swatch {
    display: block;
    flex: none;
    width: 7px;
    height: 7px;
}

.red {
    background: #b83b3e;
}

.sand {
    background: #aa956e;
}

.yellow {
    background: #e6d34c;
}

.lilac {
    background: #a5a3c9;
}

.search-box {
    display: flex;
    align-items: center;
    height: 13px;
    padding-left: 4px;
    border: 1px solid #2d2d2d;
    background: #181818;
}

.search-box svg {
    width: 12px;
}

.search-box input {
    width: 80%;
}

/* project panel */
.project {
    margin-right: 1px;
}

.project .tabs {
    height: 20px;
    padding-left: 9px;
}

.effect-tab {
    margin-left: 24px;
    gap: 7px;
}

.project .more-btn {
    margin-left: auto;
    padding-right: 3px;
}

.project-search {
    margin: 74px 6px 4px;
}

.files {
    width: 100%;
    table-layout: fixed;
    border-collapse: collapse;
}

.files th,
.files td {
    height: 13px;
    padding: 0;
    text-align: left;
    font-weight: normal;
    white-space: nowrap;
}

.files th {
    height: 12px;
    border-top: 1px solid #191919;
    border-bottom: 1px solid #191919;
    font-size: 6px;
}

.files .c-arrow {
    width: 12px;
}

.files td:first-child {
    padding-left: 4px;
}

.files .c-name {
    width: 71px;
    padding-left: 3px;
}

.files .c-label {
    width: 15px;
}

.files .c-type {
    width: 34px;
}

.files svg {
    width: 10px;
    height: 10px;
}

.sort {
    display: inline-block;
    margin-left: 34px;
    border: 4px solid transparent;
    border-top-color: #3f8ddd;
    border-bottom: none;
}

.file {
    display: flex;
    align-items: center;
    gap: 3px;
}

.project-footer {
    display: flex;
    align-items: center;
    gap: 6px;
    height: 14px;
    margin-top: auto;
    padding-left: 4px;
    color: #bbb;
}

.project-footer svg {
    width: 11px;
}

.project-footer .bpc {
    width: 24px;
    color: #999;
    font-size: 6px;
    background: #202020;
}

.project-footer .off {
    color: #777;
}

/* composition viewer */
.viewer {
    border: 2px solid #2f5378;
}

.viewer .tabs,
.viewer .flow {
    padding-left: 5px;
}

.viewer .tab {
    gap: 6px;
}

.viewer .tab .lock {
    width: 8px;
}

.viewer .layer-tab {
    margin-left: 22px;
}

.flow {
    height: 16px;
    border-bottom: 1px solid #111;
}

.flow button {
    width: 47px;
    height: 11px;
    margin: 1px 6px;
    padding-left: 7px;
    background: #1a1a1a;
    color: #3f8ddd;
    text-align: left;
}

.stage {
    flex: 1;
    min-height: 0;
    display: flex;
    justify-content: center;
    position: relative;
    padding: 3px 2px 7px 0;
}

.canvas {
    height: 100%;
    aspect-ratio: 873 / 490;
    position: relative;
    background: #eee9e5;
    color: #000;
    font-family: Inter, sans-serif;
}

.guides {
    position: absolute;
    inset: 0;
    width: 100%;
    height: 100%;
}

.logo {
    position: absolute;
    left: 95px;
    top: 54px;
    width: 77px;
    height: 74px;
    border-radius: 13px;
    background: #00005b;
    color: #9999ff;
    font: bold 46px/72px "Noto Sans", sans-serif;
    text-align: center;
}

.canvas h1 {
    position: absolute;
    left: 91px;
    top: 156px;
    margin: 0;
    font-size: 112px;
    font-weight: 700;
    line-height: 90px;
}

.subscribe {
    position: absolute;
    left: 93px;
    top: 409px;
    margin: 0;
    font-size: 24px;
    font-weight: 300;
    line-height: 32px;
    white-space: nowrap;
}

.subscribe b {
    font-weight: 700;
}

.notice {
    position: absolute;
    right: 15px;
    top: 7px;
    color: #ddd;
    font-family: Lato, sans-serif;
    font-weight: bold;
}

.viewer-footer {
    height: 14px;
    display: flex;
    align-items: center;
    border-top: 1px solid #191919;
}

.pick {
    display: flex;
    align-items: center;
    height: 12px;
    padding: 0 2px 0 6px;
    border-right: 1px solid #1a1a1a;
    color: #bbb;
}

.pick select {
    flex: 1;
    min-width: 0;
    appearance: none;
}

.zoom-pick {
    width: 48px;
}

.res-pick {
    width: 64px;
    padding-left: 12px;
}

.pick svg {
    width: 8px;
}

.view-icons {
    display: flex;
    align-items: center;
    gap: 5px;
    padding: 0 5px 0 10px;
    border-right: 1px solid #333;
    color: #bbb;
}

.view-icons svg {
    width: 10px;
    height: 10px;
}

.view-icons.colour {
    gap: 4px;
    padding: 0 7px 0 5px;
}

.view-icons.snap {
    padding-left: 6px;
    padding-right: 4px;
}

.preview-time {
    width: 46px;
    height: 12px;
    margin-left: 4px;
    background: #1e1e1e;
}

/* right dock */
.dock {
    display: flex;
    flex-direction: column;
    margin-left: 2px;
    padding-right: 7px;
    background: #232323;
    border-right: 1px solid #181818;
}

.dock > button {
    height: 20px;
    padding-left: 3px;
    border-bottom: 1px solid #181818;
    color: #888;
}

.dock-menu {
    margin: 6px 0 11px 2px;
}

.fields span {
    display: block;
    width: 12px;
    height: 12px;
    margin: 0 0 4px 4px;
    padding-left: 5px;
    overflow: hidden;
    background: #171717;
    color: #ccc;
}

.char-icons {
    width: 13px;
    margin-left: 3px;
    color: #bbb;
}

.char-icons svg {
    width: 13px;
    height: 11px;
    margin: 4px 0;
}

.char-icons hr {
    margin: 3px 0;
    border: none;
    border-top: 1px solid #333;
}

.bracket {
    width: 12px;
    height: 12px;
    margin: 21px 0 0 4px;
}

/* timeline */
.timeline {
    display: grid;
    grid-template-columns: 357px minmax(0, 1fr) 13px;
    grid-template-rows: 18px 1fr;
    margin-top: 2px;
    background: #232323;
}

.timeline .tabs {
    grid-column: 1 / -1;
    align-items: flex-end;
    padding-left: 19px;
}

.timeline .queue-tab {
    margin-right: 27px;
}

.timeline .tab.selected {
    gap: 6px;
}

.layer-head {
    display: flex;
    align-items: center;
    height: 24px;
    padding-left: 7px;
}

.timecode {
    width: 65px;
    color: #28598c;
    white-space: nowrap;
}

.timecode b {
    display: block;
    padding-left: 4px;
    color: #3f8ddd;
    font-family: "Open Sans", sans-serif;
    font-size: 10px;
}

.timecode span {
    display: block;
}

.layer-head .search-box {
    width: 173px;
}

.layer-tools {
    display: flex;
    gap: 9px;
    margin-left: 10px;
    color: #bbb;
}

.layer-tools svg {
    width: 10px;
    height: 10px;
}

.layer-tools button:first-child {
    margin-right: 2px;
}

.layer-tools button:last-child {
    margin-left: 2px;
}

.layer-row {
    display: grid;
    grid-template-columns: 50px 40px 85px 92px 1fr;
    align-items: center;
    height: 12px;
    border-bottom: 1px solid #1a1a1a;
    white-space: nowrap;
}

.columns {
    height: 13px;
    border-top: 1px solid #111;
    color: #bbb;
    font-size: 6px;
}

.av,
.switches,
.toggles {
    display: flex;
    align-items: center;
    gap: 2px;
}

.av {
    padding-left: 4px;
}

.av svg {
    width: 8px;
}

.num {
    display: flex;
    gap: 8px;
    padding-left: 5px;
}

.source {
    padding-left: 3px;
}

.switches {
    gap: 1px;
    padding-left: 4px;
}

.switches i {
    width: 9px;
    font-size: 8px;
}

.parent {
    padding-left: 4px;
}

.prop-name {
    display: flex;
    align-items: center;
    gap: 4px;
    grid-column: 2 / 4;
    padding-left: 31px;
}

.prop .parent {
    padding-left: 12px;
}

.value {
    display: flex;
    align-items: center;
    padding-left: 4px;
    color: #3f8ddd;
    white-space: pre;
}

.value svg {
    margin-right: 3px;
}

.value em {
    color: #999;
    font-style: normal;
}

.scale-row {
    height: 9px;
    align-items: end;
    overflow: hidden;
}

.layer-footer {
    grid-template-columns: 71px 106px auto;
    justify-content: start;
    height: 11px;
    border-bottom: none;
}

.toggles {
    gap: 4px;
    padding-left: 5px;
}

.render-time {
    color: #bbb;
}

.render-time b {
    color: #8fd49b;
}

.toggle-btn {
    height: 10px;
    padding: 0 3px;
    border-left: 1px solid #444;
    border-right: 1px solid #444;
    line-height: 8px;
}

.track {
    position: relative;
    padding: 5px 5px 0 4px;
    border-left: 1px solid #181818;
}

.navigator {
    height: 6px;
    margin-right: -3px;
    border: solid #3c8ae0;
    border-width: 0 4px;
    border-radius: 4px;
    background: #686868;
}

.ruler {
    display: flex;
    justify-content: space-between;
    height: 13px;
}

.ruler span {
    width: 0;
    height: 13px;
    display: flex;
    justify-content: center;
}

.work-area {
    height: 14px;
    margin-right: -3px;
    border: solid #3c8ae0;
    border-width: 0 3px;
    border-radius: 3px;
    background: linear-gradient(#666 11px, #155d1a 11px, #32a43c 12px, #32a43c 13px, #155d1a 13px);
}

.track-rows div {
    height: 9px;
    border-bottom: 1px solid #252525;
    background: #333;
}

.track-rows div:last-child {
    height: 11px;
}

.track-footer {
    display: flex;
    align-items: center;
    gap: 4px;
    height: 11px;
    margin-left: -3px;
    color: #bbb;
}

.track-footer input {
    appearance: none;
    width: 40px;
    height: 1px;
    background: #444;
}

.track-footer input::-webkit-slider-thumb {
    appearance: none;
    width: 7px;
    height: 7px;
    border: 1px solid #bbb;
    border-radius: 50%;
    background: #232323;
}

.track-footer .big {
    width: 12px;
}

.playhead {
    position: absolute;
    left: -1px;
    top: 12px;
    width: 10px;
    height: 46px;
}

.markers {
    display: flex;
    flex-direction: column;
    gap: 5px;
    padding: 25px 0 0 2px;
    color: #bbb;
}

/* taskbar */
.taskbar {
    display: grid;
    grid-template-columns: 229px minmax(0, 1fr) 229px;
    background: #202020;
    border-top: 1px solid #161616;
}

.apps {
    grid-column: 2;
    display: grid;
    grid-template-columns: repeat(28, 1fr);
    padding: 4px 0;
}

.apps button {
    display: grid;
    place-items: center;
    position: relative;
}

.apps svg {
    width: 17px;
    height: 17px;
}

.adobe {
    width: 14px;
    height: 14px;
    border-radius: 3px;
    font-size: 8px;
    font-weight: bold;
    line-height: 13px;
}

.adobe.ae {
    background: #00005b;
    color: #9d9dff;
}

.adobe.ps {
    background: #001e36;
    color: #31a8ff;
}

.adobe.ai {
    background: #330000;
    color: #ff9a00;
}

.apps .focused {
    border-radius: 3px;
    background: #303030;
}

.running::after,
.alert::after {
    content: "";
    position: absolute;
    bottom: 0;
    width: 4px;
    height: 2px;
    border-radius: 1px;
    background: #999;
}

.focused::after {
    width: 10px;
}

.alert::after {
    width: 9px;
    background: #e8ce2c;
}

.badge {
    position: absolute;
    right: 3px;
    top: 1px;
    width: 12px;
    height: 12px;
    border-radius: 50%;
    background: #484848;
    color: #aaa;
    text-align: center;
    line-height: 12px;
}

.tray {
    display: flex;
    align-items: center;
    justify-content: flex-end;
    gap: 5px;
    padding-right: 13px;
    color: #eee;
}

.tray svg {
    width: 11px;
    height: 11px;
}

.clock {
    width: 43px;
    font-family: Lato, sans-serif;
    font-size: 8px;
    line-height: 11px;
    text-align: center;
}

.clock span {
    display: block;
}

.notify {
    position: relative;
    margin-left: 7px;
}

.tray .notify svg {
    width: 13px;
    height: 13px;
}

.notify .badge {
    right: -4px;
    top: 5px;
    width: 10px;
    height: 10px;
    border: 1px solid #999;
    background: #222;
    color: #eee;
    line-height: 8px;
}
```
